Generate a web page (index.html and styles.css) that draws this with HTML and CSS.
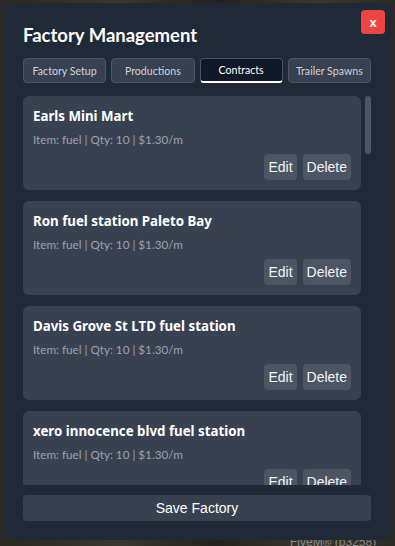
FILE: index.html
```html
<!DOCTYPE html>
<html>
<head>
<meta charset="utf-8">
<link rel="stylesheet" href="styles.css">
</head>
<body>
<div class="scene">
  <div class="panel">
    <button class="close">x</button>
    <h2 class="title">Factory Management</h2>
    <div class="tabs">
      <button class="tab">Factory Setup</button>
      <button class="tab">Productions</button>
      <button class="tab active">Contracts</button>
      <button class="tab">Trailer Spawns</button>
    </div>
    <div class="listwrap">
      <div class="list">
        <div class="card"><div class="name">Earls Mini Mart</div><div class="meta">Item: fuel | Qty: 10 | $1.30/m</div><div class="actions"><button class="btn">Edit</button><button class="btn">Delete</button></div></div>
        <div class="card"><div class="name">Ron fuel station Paleto Bay</div><div class="meta">Item: fuel | Qty: 10 | $1.30/m</div><div class="actions"><button class="btn">Edit</button><button class="btn">Delete</button></div></div>
        <div class="card"><div class="name">Davis Grove St LTD fuel station</div><div class="meta">Item: fuel | Qty: 10 | $1.30/m</div><div class="actions"><button class="btn">Edit</button><button class="btn">Delete</button></div></div>
        <div class="card"><div class="name">xero innocence blvd fuel station</div><div class="meta">Item: fuel | Qty: 10 | $1.30/m</div><div class="actions"><button class="btn">Edit</button><button class="btn">Delete</button></div></div>
      </div>
      <div class="track"><div class="thumb"></div></div>
    </div>
    <button class="save">Save Factory</button>
  </div>
  <div class="watermark">FiveM® (b3258)</div>
</div>
</body>
</html>
```
FILE: styles.css
```css
html, body {
  margin: 0;
  padding: 0;
  width: 395px;
  height: 546px;
  overflow: hidden;
}
body {
  background: linear-gradient(90deg, #2a2823 0%, #3a3630 30%, #24221e 55%, #3b372f 80%, #2c2a25 100%);
  font-family: "Lato", "Noto Sans", sans-serif;
}
.scene {
  position: relative;
  width: 395px;
  height: 546px;
  padding: 3px 0 0 3px;
  box-sizing: border-box;
}
.panel {
  position: relative;
  width: 388px;
  height: 537px;
  box-sizing: border-box;
  background: #1f2937;
  border-radius: 8px;
  padding: 20px;
  display: flex;
  flex-direction: column;
  z-index: 1;
}
.close {
  position: absolute;
  top: 7px;
  right: 6px;
  width: 24px;
  height: 24px;
  border: none;
  border-radius: 4px;
  background: #ef4444;
  color: #fff;
  font-family: "Liberation Sans", Arial, sans-serif;
  font-weight: bold;
  font-size: 13px;
  padding: 0;
  line-height: 26px;
}
.title {
  margin: 0;
  color: #fff;
  font-family: "Lato", "Noto Sans", sans-serif;
  font-size: 18.5px;
  font-weight: 700;
  line-height: 24px;
}
.tabs {
  display: flex;
  gap: 5px;
  margin-top: 11px;
}
.tab {
  flex: 1;
  height: 25px;
  padding: 0;
  background: #374151;
  border: 1px solid #4b5563;
  border-radius: 4px;
  color: #d1d5db;
  font-family: "Lato", "Noto Sans", sans-serif;
  font-size: 10.6px;
  white-space: nowrap;
  box-sizing: border-box;
}
.tab.active {
  background: #111827;
  color: #fff;
  border-bottom: 2px solid #fff;
}
.listwrap {
  margin-top: 12px;
  height: 390px;
  display: flex;
  gap: 4px;
}
.list {
  flex: 1;
  overflow: hidden;
  padding-top: 1px;
  display: flex;
  flex-direction: column;
  gap: 11px;
}
.track {
  width: 6px;
  flex: none;
  padding-top: 1px;
}
.thumb {
  height: 58px;
  background: #4b5563;
  border-radius: 3px;
}
.card {
  flex: none;
  background: #374151;
  border-radius: 6px;
  padding: 10px;
  height: 94px;
  box-sizing: border-box;
  display: flex;
  flex-direction: column;
}
.name {
  color: #fff;
  font-family: "Noto Sans", "Lato", sans-serif;
  font-weight: 700;
  font-size: 13.3px;
  line-height: 20px;
}
.meta {
  margin-top: 4px;
  color: #9ca3af;
  font-family: "Lato", "Noto Sans", sans-serif;
  font-size: 11.7px;
  line-height: 18px;
}
.actions {
  margin-top: 6px;
  display: flex;
  justify-content: flex-end;
  gap: 6px;
}
.btn {
  height: 26px;
  padding: 0 4px;
  border: none;
  border-radius: 4px;
  background: #4b5563;
  color: #f3f4f6;
  font-family: "Liberation Sans", Arial, sans-serif;
  font-size: 14px;
}
.save {
  margin-top: 10px;
  height: 26px;
  flex: none;
  border: none;
  border-radius: 4px;
  background: #374151;
  color: #fff;
  font-family: "Liberation Sans", Arial, sans-serif;
  font-size: 14px;
}
.watermark {
  position: absolute;
  left: 290px;
  top: 535px;
  color: #8a8a8a;
  font-family: "Liberation Sans", Arial, sans-serif;
  font-size: 12px;
  z-index: 0;
}
```
